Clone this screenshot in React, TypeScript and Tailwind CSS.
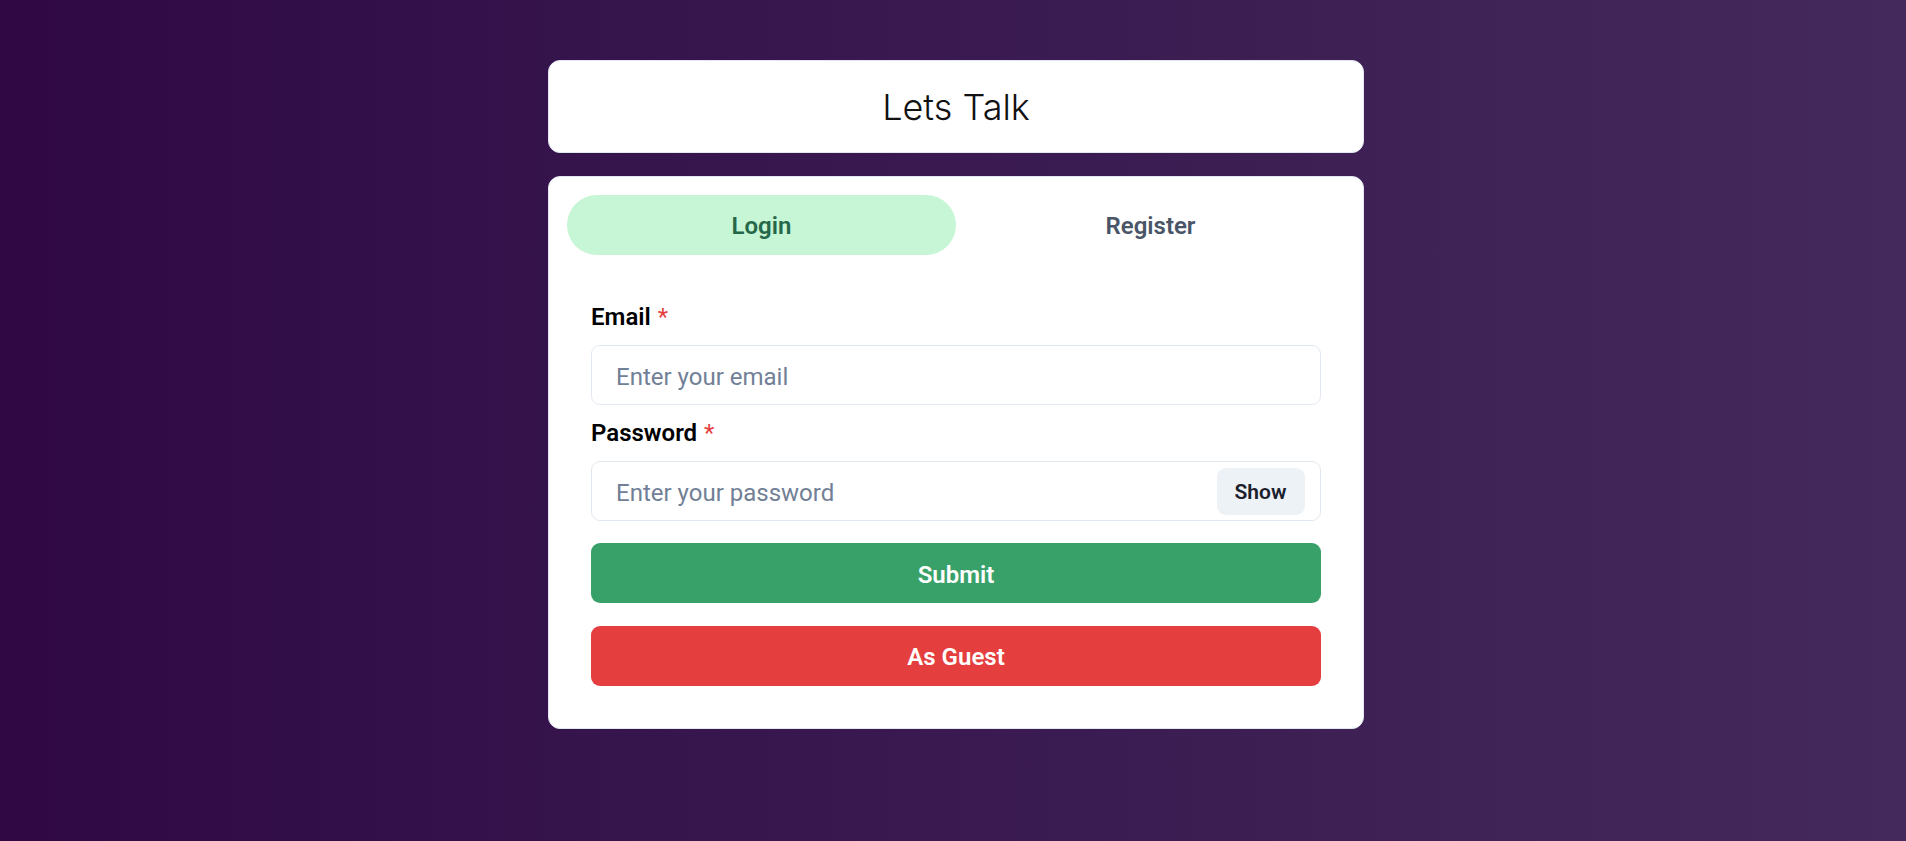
import React from "react";

export default function App() {
  return (
    <div className="min-h-[841px] w-full bg-linear-to-r from-[#2f0844] to-[#44295c] font-[Roboto,sans-serif] pt-[60px] pl-[6px] flex justify-center items-start">
      <div className="w-[816px] flex flex-col">
        <div className="h-[93px] bg-white rounded-[12px] border-[1.5px] border-[#e2e8f0] flex items-center justify-center">
          <span className="font-['Inter',sans-serif] font-light text-[36px] leading-none text-[#111111]">Lets Talk</span>
        </div>
        <div className="mt-[23px] bg-white rounded-[12px] border-[1.5px] border-[#e2e8f0] p-[18px]">
          <div className="flex">
            <button className="flex-1 h-[60px] pt-[2px] rounded-full bg-[#c6f6d5] text-[#276749] text-[24px] font-semibold">Login</button>
            <button className="flex-1 h-[60px] pt-[2px] rounded-full text-[#4a5568] text-[24px] font-semibold">Register</button>
          </div>
          <div className="px-[24px] pt-[44px] pb-[24px] flex flex-col">
            <label className="h-[36px] leading-[36px] text-[24px] font-semibold text-[#000000]">
              Email<span className="ml-[7px] text-[#e53e3e] font-normal">*</span>
            </label>
            <div className="mt-[10px] h-[60px] rounded-[9px] border-[1.5px] border-[#e2e8f0] flex items-center">
              <input
                className="w-full h-full bg-transparent outline-none pl-[24px] pr-[24px] pt-[4px] text-[24px] text-[#1a202c] placeholder:text-[#718096]"
                placeholder="Enter your email"
              />
            </div>
            <label className="mt-[10px] h-[36px] leading-[36px] text-[24px] font-semibold text-[#000000]">
              Password<span className="ml-[7px] text-[#e53e3e] font-normal">*</span>
            </label>
            <div className="mt-[10px] h-[60px] rounded-[9px] border-[1.5px] border-[#e2e8f0] flex items-center pr-[15.5px]">
              <input
                type="password"
                className="flex-1 min-w-0 h-full bg-transparent outline-none pl-[24px] pr-[12px] pt-[4px] text-[24px] text-[#1a202c] placeholder:text-[#718096]"
                placeholder="Enter your password"
              />
              <button className="w-[88px] h-[47px] pt-[3px] rounded-[9px] bg-[#edf2f7] text-[21px] font-semibold text-[#1a202c]">Show</button>
            </div>
            <button className="mt-[22px] h-[60px] pt-[3px] rounded-[9px] bg-[#38a169] text-white text-[24px] font-semibold">Submit</button>
            <button className="mt-[23px] h-[60px] pt-[2px] rounded-[9px] bg-[#e53e3e] text-white text-[24px] font-semibold">As Guest</button>
          </div>
        </div>
      </div>
    </div>
  );
}
